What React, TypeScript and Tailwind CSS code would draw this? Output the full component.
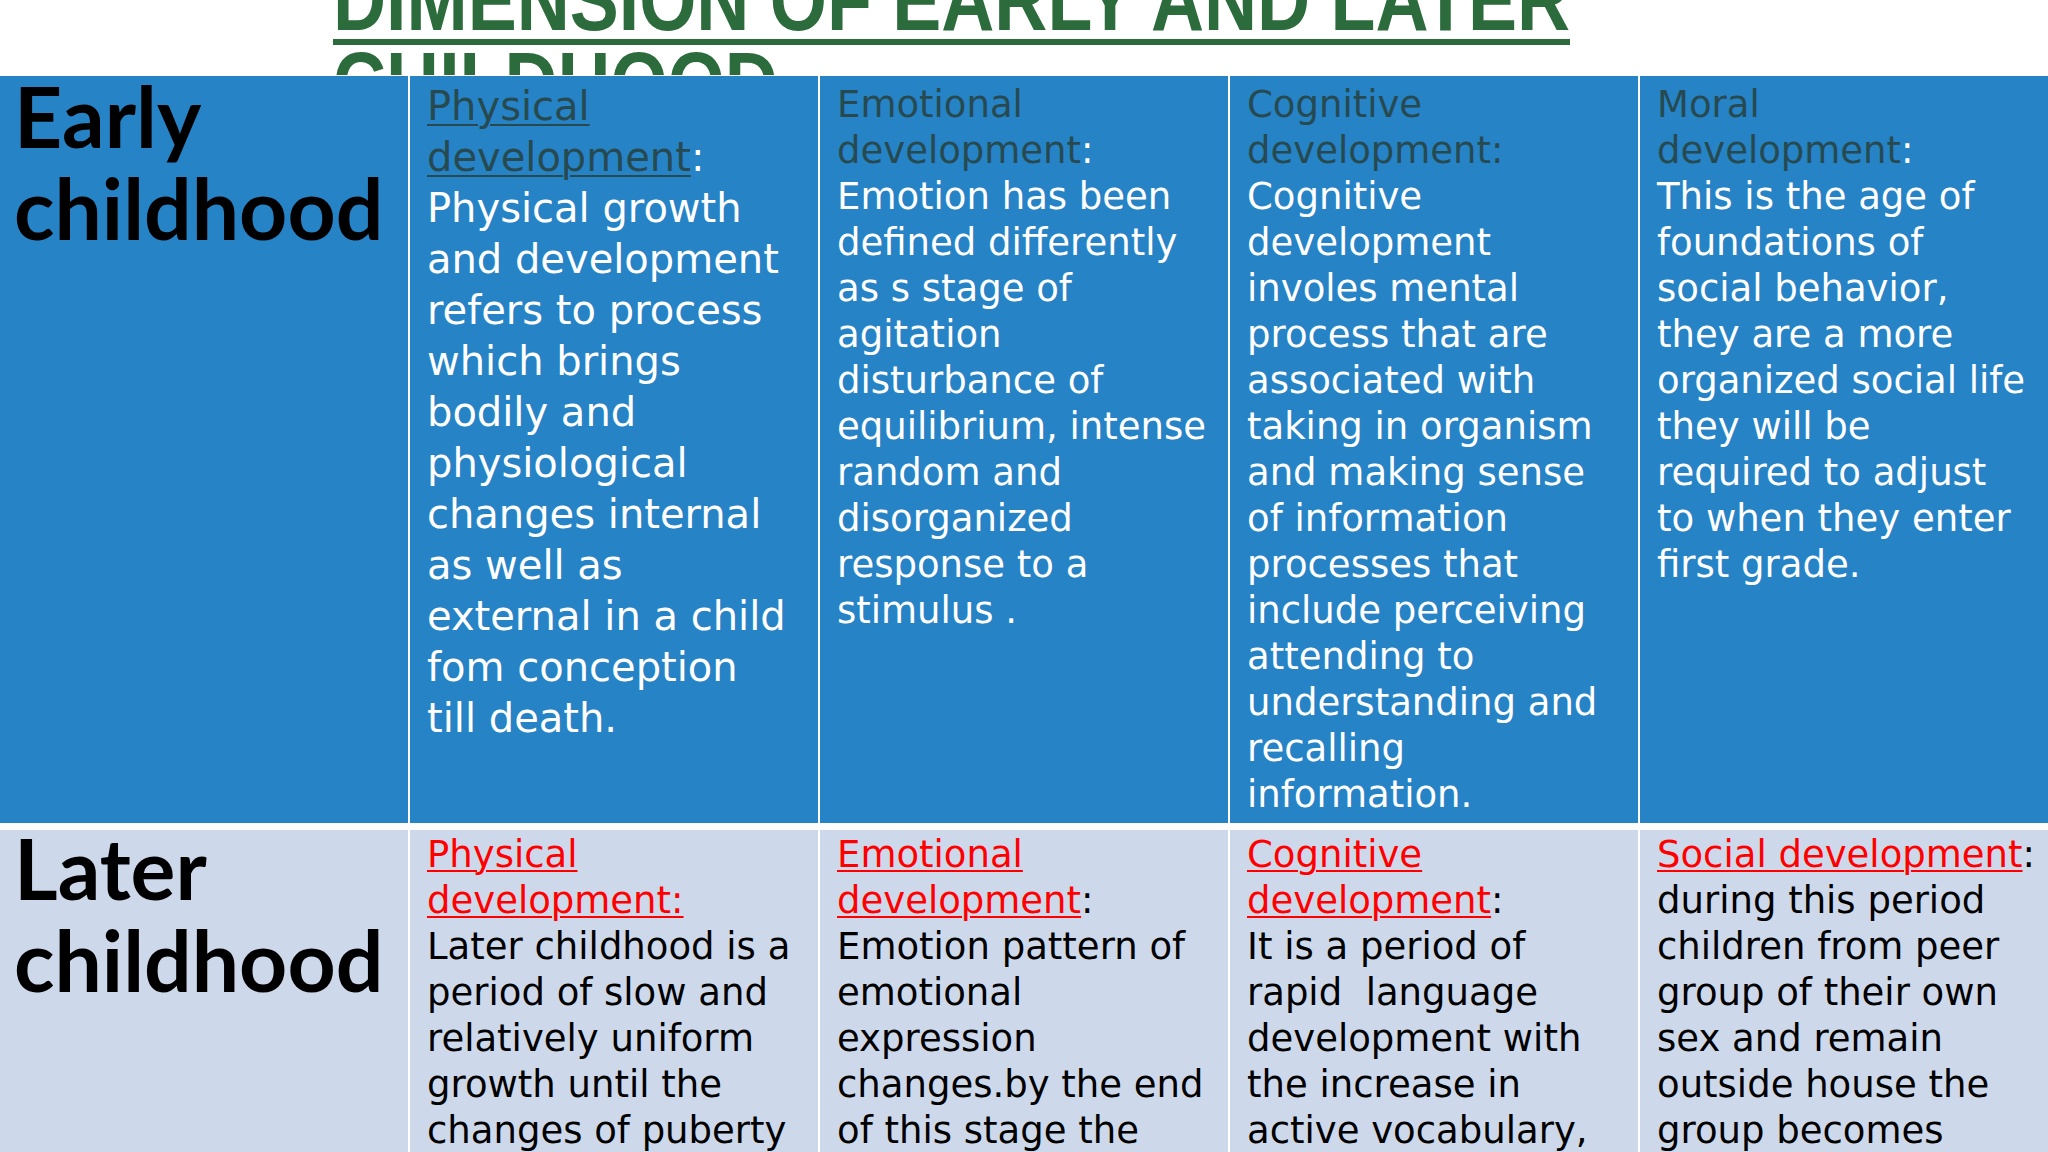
import React from "react";

const BODY = "font-['DejaVu_Sans','Verdana',sans-serif]";
const HEAD = "font-['Lato','Liberation_Sans',sans-serif]";

function Lines({ lines }: { lines: string[] }) {
  return (
    <>
      {lines.map((l, i) => (
        <div key={i} className="whitespace-pre">
          {l}
        </div>
      ))}
    </>
  );
}

const row1Cols = [
  {
    head: ["Physical", "development"],
    colonDark: false,
    underline: true,
    body: [
      "Physical growth",
      "and development",
      "refers to process",
      "which brings",
      "bodily and",
      "physiological",
      "changes internal",
      "as well as",
      "external in a child",
      "fom conception",
      "till death.",
    ],
    big: true,
  },
  {
    head: ["Emotional", "development"],
    colonDark: false,
    underline: false,
    body: [
      "Emotion has been",
      "defined differently",
      "as s stage of",
      "agitation",
      "disturbance of",
      "equilibrium, intense",
      "random and",
      "disorganized",
      "response to a",
      "stimulus .",
    ],
    big: false,
  },
  {
    head: ["Cognitive", "development"],
    colonDark: true,
    underline: false,
    body: [
      "Cognitive",
      "development",
      "involes mental",
      "process that are",
      "associated with",
      "taking in organism",
      "and making sense",
      "of information",
      "processes that",
      "include perceiving",
      "attending to",
      "understanding and",
      "recalling",
      "information.",
    ],
    big: false,
  },
  {
    head: ["Moral", "development"],
    colonDark: false,
    underline: false,
    body: [
      "This is the age of",
      "foundations of",
      "social behavior,",
      "they are a more",
      "organized social life",
      "they will be",
      "required to adjust",
      "to when they enter",
      "first grade.",
    ],
    big: false,
  },
];

const row2Cols = [
  {
    head: ["Physical", "development:"],
    colonRed: true,
    body: [
      "Later childhood is a",
      "period of slow and",
      "relatively uniform",
      "growth until the",
      "changes of puberty",
    ],
  },
  {
    head: ["Emotional", "development"],
    colonRed: false,
    body: [
      "Emotion pattern of",
      "emotional",
      "expression",
      "changes.by the end",
      "of this stage the",
    ],
  },
  {
    head: ["Cognitive", "development"],
    colonRed: false,
    body: [
      "It is a period of",
      "rapid  language",
      "development with",
      "the increase in",
      "active vocabulary,",
    ],
  },
  {
    head: ["Social development"],
    colonRed: false,
    body: [
      "during this period",
      "children from peer",
      "group of their own",
      "sex and remain",
      "outside house the",
      "group becomes",
    ],
  },
];

export default function App() {
  return (
    <div className="h-[1152px] w-[2048px] overflow-hidden bg-white">
      {/* Title */}
      <div className="h-[75px] overflow-hidden pl-[333px]">
        <div className="-mt-[42px] origin-left scale-x-[0.835] whitespace-nowrap font-['Liberation_Sans','Arial',sans-serif] text-[88px] font-bold leading-[83px] text-[#2c6b3c] underline decoration-[6px] underline-offset-[9px]">
          DIMENSION OF EARLY AND LATER
          <br />
          CHILDHOOD
        </div>
      </div>

      {/* Table */}
      <div className="grid grid-cols-5 gap-x-[2px] gap-y-[7px] bg-white pt-px">
        {/* Row 1 */}
        <div className="h-[747px] overflow-hidden bg-[#2683c6] pl-[14px]">
          <div className={`${HEAD} -mt-[6px] text-[84px] font-bold leading-[92px] text-black`}>
            <div>Early</div>
            <div>childhood</div>
          </div>
        </div>
        {row1Cols.map((c, i) => (
          <div
            key={i}
            className={`h-[747px] overflow-hidden bg-[#2683c6] px-[17px] ${BODY} text-white ${
              c.big ? "pt-[5px] text-[40px] leading-[51px]" : "pt-[6px] text-[37px] leading-[46px]"
            }`}
          >
            <div className={`text-[#274a51] ${c.underline ? "underline decoration-[2px] underline-offset-[4px]" : ""}`}>
              {c.head[0]}
            </div>
            <div>
              <span className={`text-[#274a51] ${c.underline ? "underline decoration-[2px] underline-offset-[4px]" : ""}`}>
                {c.head[1]}
              </span>
              <span className={c.colonDark ? "text-[#274a51]" : "text-white"}>:</span>
            </div>
            <Lines lines={c.body} />
          </div>
        ))}

        {/* Row 2 */}
        <div className="h-[400px] overflow-hidden bg-[#cdd9ea] pl-[14px]">
          <div className={`${HEAD} -mt-[8px] text-[84px] font-bold leading-[92px] text-black`}>
            <div>Later</div>
            <div>childhood</div>
          </div>
        </div>
        {row2Cols.map((c, i) => (
          <div
            key={i}
            className={`h-[400px] overflow-hidden bg-[#cdd9ea] px-[17px] pt-[2px] ${BODY} text-[37px] leading-[46px] text-black`}
          >
            {c.head.length === 2 ? (
              <>
                <div>
                  <span className="text-[#ff0000] underline decoration-[2px] underline-offset-[3px]">{c.head[0]}</span>
                </div>
                <div>
                  {c.colonRed ? (
                    <span className="text-[#ff0000] underline decoration-[2px] underline-offset-[3px]">{c.head[1]}</span>
                  ) : (
                    <>
                      <span className="text-[#ff0000] underline decoration-[2px] underline-offset-[3px]">{c.head[1]}</span>
                      <span>:</span>
                    </>
                  )}
                </div>
              </>
            ) : (
              <div className="whitespace-nowrap">
                <span className="text-[#ff0000] underline decoration-[2px] underline-offset-[3px]">{c.head[0]}</span>
                <span>:</span>
              </div>
            )}
            <Lines lines={c.body} />
          </div>
        ))}
      </div>
    </div>
  );
}
